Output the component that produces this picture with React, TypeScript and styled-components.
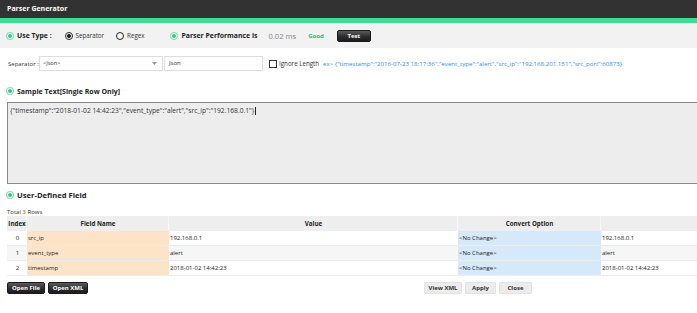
import styled, { createGlobalStyle } from "styled-components";

const GlobalStyle = createGlobalStyle`
  html, body {
    margin: 0;
    padding: 0;
    background: #fff;
    overflow: hidden;
  }
  body {
    font-family: "Open Sans", "Noto Sans", sans-serif;
    color: #333;
  }
`;

type FieldRow = {
  index: number;
  name: string;
  value: string;
  option: string;
  result: string;
};

const rows: FieldRow[] = [
  { index: 0, name: "src_ip", value: "192.168.0.1", option: "<No Change>", result: "192.168.0.1" },
  { index: 1, name: "event_type", value: "alert", option: "<No Change>", result: "alert" },
  { index: 2, name: "timestamp", value: "2018-01-02 14:42:23", option: "<No Change>", result: "2018-01-02 14:42:23" },
];

const Page = styled.div`
  width: 720px;
`;

const TitleBar = styled.div`
  height: 18px;
  line-height: 18px;
  padding-left: 7px;
  background: #323232;
  border-bottom: 5px solid #3ddc93;
  color: #fff;
  font-size: 7px;
  font-weight: 700;
`;

const Toolbar = styled.div`
  height: 25px;
  display: flex;
  align-items: center;
  padding-left: 7px;
  background: #f2f2f2;
`;

const Bullet = styled.span`
  display: inline-block;
  width: 4px;
  height: 4px;
  border-radius: 50%;
  background: #35c985;
  border: 1px solid #fff;
  box-shadow: 0 0 0 1px #8fe0b8;
  margin-right: 4px;
`;

const Label = styled.span<{ $offset?: number }>`
  display: inline-flex;
  align-items: center;
  margin-left: ${(p) => p.$offset ?? 0}px;
  font-size: 6.9px;
  font-weight: 700;
  color: #222;
  white-space: nowrap;
`;

const Radio = styled.label<{ $offset: number }>`
  display: inline-flex;
  align-items: center;
  margin-left: ${(p) => p.$offset}px;
  font-size: 6.2px;
  color: #333;
  gap: 3px;
`;

const RadioDot = styled.span<{ $checked?: boolean }>`
  box-sizing: border-box;
  width: 8px;
  height: 8px;
  border-radius: 50%;
  border: 1px solid #222;
  background: ${(p) =>
    p.$checked ? "radial-gradient(circle, #222 0 1.8px, #fff 2.2px)" : "#fff"};
`;

const Metric = styled.span`
  margin-left: 11px;
  font-size: 7.6px;
  color: #888;
`;

const Status = styled.span`
  margin-left: 12px;
  font-size: 6px;
  font-weight: 700;
  color: #2cbf6c;
`;

const DarkButton = styled.button<{ $width: number; $offset?: number }>`
  box-sizing: border-box;
  width: ${(p) => p.$width}px;
  height: 12px;
  margin-left: ${(p) => p.$offset ?? 0}px;
  padding: 0;
  border: 1px solid #1a1a1a;
  border-radius: 2px;
  background: linear-gradient(#5a5a5a, #2a2a2a 60%, #1c1c1c);
  color: #fff;
  font-family: inherit;
  font-size: 6px;
  font-weight: 700;
  line-height: 10px;
`;

const LightButton = styled.button<{ $width: number }>`
  box-sizing: border-box;
  width: ${(p) => p.$width}px;
  height: 12px;
  padding: 0;
  border: 1px solid #e2e2e2;
  border-radius: 1px;
  background: #ececec;
  color: #333;
  font-family: inherit;
  font-size: 6px;
  font-weight: 700;
  line-height: 10px;
`;

const SeparatorRow = styled.div`
  display: flex;
  align-items: center;
  height: 15px;
  margin-top: 8px;
  padding-left: 8px;
  font-size: 6px;
  color: #333;
`;

const FieldLabel = styled.span`
  width: 31px;
  white-space: nowrap;
`;

const SelectBox = styled.div`
  box-sizing: border-box;
  position: relative;
  width: 124px;
  height: 15px;
  padding-left: 3px;
  border: 1px solid #ddd;
  line-height: 13px;
  font-size: 5.6px;
`;

const SelectArrow = styled.svg`
  position: absolute;
  right: 5px;
  top: 5px;
`;

const TextInput = styled.div`
  box-sizing: border-box;
  width: 99px;
  height: 15px;
  margin-left: 1px;
  padding-left: 4px;
  border: 1px solid #ddd;
  line-height: 13px;
  font-size: 6px;
`;

const Check = styled.label`
  display: inline-flex;
  align-items: center;
  gap: 2px;
  margin-left: 6px;
  font-size: 6.2px;
  white-space: nowrap;
`;

const CheckSquare = styled.span`
  box-sizing: border-box;
  width: 8px;
  height: 8px;
  border: 1px solid #333;
  background: #fff;
`;

const Example = styled.span`
  margin-left: 4px;
  font-size: 6.15px;
  color: #2b8ef2;
  white-space: nowrap;
`;

const SectionTitle = styled.div<{ $top: number; $size?: number }>`
  display: flex;
  align-items: center;
  margin-top: ${(p) => p.$top}px;
  padding-left: 7px;
  height: 10px;
  font-size: ${(p) => p.$size ?? 7}px;
  font-weight: 700;
  color: #222;
`;

const SampleBox = styled.div`
  box-sizing: border-box;
  width: 720px;
  height: 82px;
  margin: 6px 0 0 7px;
  padding: 3px 2px;
  background: #ededed;
  border: 1px solid #8a8a8a;
  border-top-width: 1.5px;
  font-size: 6.7px;
  color: #333;
  white-space: nowrap;
`;

const Caret = styled.span`
  display: inline-block;
  width: 1px;
  height: 8px;
  margin-left: 1px;
  vertical-align: middle;
  background: #222;
`;

const TotalLine = styled.div`
  margin-top: 8px;
  padding-left: 7px;
  font-size: 6px;
  color: #333;
  line-height: 8px;
`;

const Count = styled.span`
  color: #f08c1c;
  font-weight: 700;
`;

const Grid = styled.table`
  margin: 0 0 0 7px;
  border-collapse: collapse;
  table-layout: fixed;
  width: 710px;
  font-size: 6px;
  color: #222;
`;

const HeadCell = styled.th`
  height: 15px;
  padding: 0;
  background: #eeeeee;
  box-shadow: inset -1px 0 0 #f8f8f8;
  font-weight: 700;
  font-size: 6.2px;
  text-align: center;
`;

type Tone = "plain" | "peach" | "blue";

const toneBg: Record<Tone, string> = {
  plain: "transparent",
  peach: "#fde4c8",
  blue: "#d5e9fb",
};

const Cell = styled.td<{ $tone?: Tone; $center?: boolean }>`
  height: 14px;
  padding: 0 0 0 1px;
  background: ${(p) => toneBg[p.$tone ?? "plain"]};
  border-bottom: 1px solid #ececec;
  text-align: ${(p) => (p.$center ? "center" : "left")};
  white-space: nowrap;
  overflow: hidden;
`;

const BodyRow = styled.tr<{ $striped: boolean }>`
  background: ${(p) => (p.$striped ? "#f6f6f6" : "#fff")};
`;

const Col = styled.col<{ $width: number }>`
  width: ${(p) => p.$width}px;
`;

const Footer = styled.div`
  display: flex;
  align-items: center;
  margin: 6px 0 0 7px;
  gap: 3px;
`;

const ButtonGroup = styled.div<{ $offset?: number }>`
  display: flex;
  gap: 3px;
  margin-left: ${(p) => p.$offset ?? 0}px;
`;

export default function App() {
  return (
    <Page>
      <GlobalStyle />
      <TitleBar>Parser Generator</TitleBar>
      <Toolbar>
        <Label>
          <Bullet />
          Use Type :
        </Label>
        <Radio $offset={13}>
          <RadioDot $checked />
          Separator
        </Radio>
        <Radio $offset={12}>
          <RadioDot />
          Regex
        </Radio>
        <Label $offset={27}>
          <Bullet />
          Parser Performance is
        </Label>
        <Metric>0.02 ms</Metric>
        <Status>Good</Status>
        <DarkButton $width={34} $offset={13}>
          Test
        </DarkButton>
      </Toolbar>

      <SeparatorRow>
        <FieldLabel>Separator :</FieldLabel>
        <SelectBox>
          &lt;Json&gt;
          <SelectArrow width="5" height="3" viewBox="0 0 5 3">
            <path d="M0 0 L5 0 L2.5 3 Z" fill="#999" />
          </SelectArrow>
        </SelectBox>
        <TextInput>Json</TextInput>
        <Check>
          <CheckSquare />
          Ignore Length
        </Check>
        <Example>
          ex&gt; {'{"timestamp":"2016-07-23 18:17:36","event_type":"alert","src_ip":"192.168.201.151","src_port":60873}'}
        </Example>
      </SeparatorRow>

      <SectionTitle $top={15}>
        <Bullet />
        Sample Text[Single Row Only]
      </SectionTitle>
      <SampleBox>
        {'{"timestamp":"2018-01-02 14:42:23","event_type":"alert","src_ip":"192.168.0.1"}'}
        <Caret />
      </SampleBox>

      <SectionTitle $top={6} $size={7.6}>
        <Bullet />
        User-Defined Field
      </SectionTitle>
      <TotalLine>
        Total <Count>3</Count> Rows
      </TotalLine>

      <Grid>
        <colgroup>
          <Col $width={20} />
          <Col $width={142} />
          <Col $width={289} />
          <Col $width={143} />
          <Col $width={116} />
        </colgroup>
        <thead>
          <tr>
            <HeadCell>Index</HeadCell>
            <HeadCell>Field Name</HeadCell>
            <HeadCell>Value</HeadCell>
            <HeadCell>Convert Option</HeadCell>
            <HeadCell></HeadCell>
          </tr>
        </thead>
        <tbody>
          {rows.map((r) => (
            <BodyRow key={r.index} $striped={r.index % 2 === 1}>
              <Cell $center>{r.index}</Cell>
              <Cell $tone="peach">{r.name}</Cell>
              <Cell>{r.value}</Cell>
              <Cell $tone="blue">{r.option}</Cell>
              <Cell>{r.result}</Cell>
            </BodyRow>
          ))}
        </tbody>
      </Grid>

      <Footer>
        <ButtonGroup>
          <DarkButton $width={38}>Open File</DarkButton>
          <DarkButton $width={40}>Open XML</DarkButton>
        </ButtonGroup>
        <ButtonGroup $offset={333}>
          <LightButton $width={38}>View XML</LightButton>
          <LightButton $width={31}>Apply</LightButton>
          <LightButton $width={33}>Close</LightButton>
        </ButtonGroup>
      </Footer>
    </Page>
  );
}
